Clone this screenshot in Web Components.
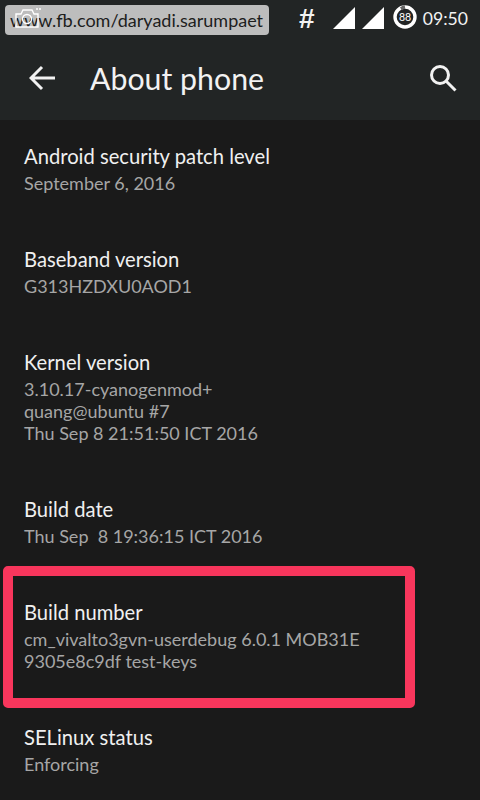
<!DOCTYPE html>
<html>
<head>
<meta charset="utf-8">
<style>
  html, body { margin: 0; height: 800px; overflow: hidden; background: #1a1a1a; }
</style>
</head>
<body>
<about-screen></about-screen>
<script>
'use strict';

class StatusBar extends HTMLElement {
  connectedCallback() {
    this.attachShadow({ mode: 'open' });
    this.shadowRoot.innerHTML = `
      <style>
        :host {
          display: flex; align-items: center; height: 40px;
          padding: 0 12px 0 5px; box-sizing: border-box;
          font-family: Lato, sans-serif; color: #f2f2f2;
        }
        .pill {
          position: relative;
          width: 264px; height: 30px;
          background: #bdbdbd; border-radius: 4px;
          color: #1d1d1d; font-size: 18px; line-height: 30px;
          padding-left: 5px; box-sizing: border-box; white-space: nowrap;
        }
        .pill svg { position: absolute; left: 9px; top: 1px; }
        .icons { display: flex; align-items: center; margin-left: auto; }
        .hash { font: bold 28px "Liberation Sans", sans-serif; width: 22px; text-align: center; margin-right: 15px; margin-bottom: 2px; }
        .sig { display: block; margin-right: 7px; margin-bottom: 5px; }
        .batt { display: block; margin-left: 2px; margin-right: 6px; margin-bottom: 7px; }
        .time { font-size: 17.6px; margin-bottom: 3px; }
      </style>
      <div class="pill">
        <svg width="30" height="24" viewBox="0 0 30 24" fill="none" stroke="#fff" stroke-width="1.4">
          <path d="M2 8h5l2-4h9l2 4h4v13H2z"/><circle cx="13" cy="13" r="4.5"/>
          <path d="M22 3h6" stroke-dasharray="2 1"/>
        </svg>
        <slot name="url"></slot>
      </div>
      <div class="icons">
        <span class="hash">#</span>
        <svg class="sig" width="22" height="22" viewBox="0 0 22 22"><path d="M0 22 22 0v22z" fill="#fff"/></svg>
        <svg class="sig" width="22" height="22" viewBox="0 0 22 22"><path d="M0 22 22 0v22z" fill="#fff"/></svg>
        <svg class="batt" width="24" height="24" viewBox="0 0 24 24">
          <circle cx="12" cy="12" r="10" fill="none" stroke="#fff" stroke-width="3.4"/>
          <path d="M8 3.8A10 10 0 0 1 12 2" fill="none" stroke="#666" stroke-width="3.4"/>
          <text x="12" y="15.5" font-family="Lato, sans-serif" font-size="10.5" fill="#fff" text-anchor="middle">88</text>
        </svg>
        <span class="time"><slot name="time"></slot></span>
      </div>
    `;
  }
}

class AppBar extends HTMLElement {
  connectedCallback() {
    this.attachShadow({ mode: 'open' });
    this.shadowRoot.innerHTML = `
      <style>
        :host {
          display: flex; align-items: center; height: 80px;
          padding: 0 23px 4px 29px; box-sizing: border-box;
          font-family: Lato, sans-serif; color: #f2f2f2;
        }
        .title { font-size: 30.3px; margin-left: 35px; flex: 1; }
        svg { display: block; }
      </style>
      <svg width="26" height="26" viewBox="0 0 26 26" fill="none" stroke="#f2f2f2" stroke-width="3">
        <path d="M26 13H2M13 2 2 13l11 11"/>
      </svg>
      <span class="title"><slot></slot></span>
      <svg width="28" height="28" viewBox="0 0 28 28" fill="none" stroke="#f2f2f2" stroke-width="3">
        <circle cx="11" cy="11" r="8.5"/><path d="m17 17 9.5 9.5"/>
      </svg>
    `;
  }
}

class InfoRow extends HTMLElement {
  connectedCallback() {
    this.attachShadow({ mode: 'open' });
    this.shadowRoot.innerHTML = `
      <style>
        :host {
          display: block; padding: 21px 24px 30px;
          font-family: Lato, sans-serif;
        }
        .t { font-size: 20.2px; line-height: 28px; color: #f0f0f0; }
        .s { font-size: 18px; line-height: 22px; color: #a6a6a6; margin-top: 2px; }
      </style>
      <div class="t">${this.getAttribute('label')}</div>
      <div class="s"><slot></slot></div>
    `;
  }
}

class AboutScreen extends HTMLElement {
  connectedCallback() {
    this.attachShadow({ mode: 'open' });
    this.shadowRoot.innerHTML = `
      <style>
        :host { display: block; position: relative; width: 480px; height: 800px; overflow: hidden; background: #1a1a1a; }
        header { background: #222525; height: 120px; }
        .list { padding-top: 1px; }
        .mark {
          position: absolute; left: 3px; top: 566px; width: 412px; height: 142px;
          border: 10px solid #f8365c; border-radius: 5px; box-sizing: border-box;
        }
      </style>
      <header>
        <status-bar>
          <span slot="url">www.fb.com/daryadi.sarumpaet</span>
          <span slot="time">09:50</span>
        </status-bar>
        <app-bar>About phone</app-bar>
      </header>
      <div class="list">
        <info-row label="Android security patch level">September 6, 2016</info-row>
        <info-row label="Baseband version">G313HZDXU0AOD1</info-row>
        <info-row label="Kernel version">3.10.17-cyanogenmod+<br>quang@ubuntu #7<br>Thu Sep 8 21:51:50 ICT 2016</info-row>
        <info-row label="Build date">Thu Sep &nbsp;8 19:36:15 ICT 2016</info-row>
        <info-row label="Build number">cm_vivalto3gvn-userdebug 6.0.1 MOB31E<br>9305e8c9df test-keys</info-row>
        <info-row label="SELinux status">Enforcing</info-row>
      </div>
      <div class="mark"></div>
    `;
  }
}

customElements.define('status-bar', StatusBar);
customElements.define('app-bar', AppBar);
customElements.define('info-row', InfoRow);
customElements.define('about-screen', AboutScreen);
</script>
</body>
</html>
